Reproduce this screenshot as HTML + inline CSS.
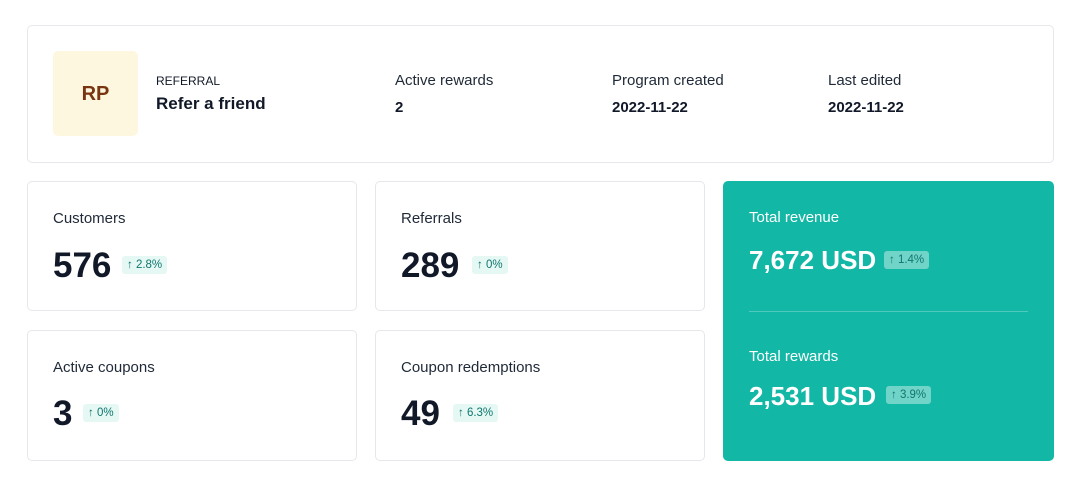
<!DOCTYPE html>
<html><head><style>
*{box-sizing:border-box;margin:0;padding:0}
body{width:1080px;height:483px;background:#fff;font-family:"Liberation Sans",sans-serif;color:#111827;position:relative;overflow:hidden}
.card{position:absolute;border:1px solid #e5e7eb;border-radius:5px;background:#fff}
.abs{position:absolute;white-space:nowrap}
.lbl{font-size:15px;color:#1f2937}
.val{font-size:15px;font-weight:bold;color:#111827}
.num{font-size:35px;font-weight:bold;color:#111827}
.badge{position:absolute;background:#e6f8f4;color:#0f766e;font-size:11.5px;border-radius:3px;height:18px;line-height:18px;padding:0 5px}
.tbadge{position:absolute;background:rgba(255,255,255,0.4);color:#0f766e;font-size:11.5px;border-radius:3px;height:18px;line-height:18px;padding:0 5px}
</style></head><body>
<div class="card" style="left:27px;top:25px;width:1027px;height:138px"></div>
<div class="abs" style="left:53px;top:51px;width:85px;height:85px;background:#fef7e0;border-radius:5px;color:#78350f;font-size:20px;font-weight:bold;text-align:center;line-height:87px">RP</div>
<div class="abs" style="left:156px;top:74px;font-size:12px;color:#111827">REFERRAL</div>
<div class="abs" style="left:156px;top:94px;font-size:17px;font-weight:bold">Refer a friend</div>
<div class="abs lbl" style="left:395px;top:72px">Active rewards</div>
<div class="abs val" style="left:395px;top:99px">2</div>
<div class="abs lbl" style="left:612px;top:72px">Program created</div>
<div class="abs val" style="left:612px;top:99px">2022-11-22</div>
<div class="abs lbl" style="left:828px;top:72px">Last edited</div>
<div class="abs val" style="left:828px;top:99px">2022-11-22</div>

<div class="card" style="left:27px;top:181px;width:330px;height:130px"></div>
<div class="abs lbl" style="left:53px;top:210px">Customers</div>
<div class="abs num" style="left:53px;top:246px">576</div>
<div class="badge" style="left:122px;top:256px">↑ 2.8%</div>

<div class="card" style="left:375px;top:181px;width:330px;height:130px"></div>
<div class="abs lbl" style="left:401px;top:210px">Referrals</div>
<div class="abs num" style="left:401px;top:246px">289</div>
<div class="badge" style="left:472px;top:256px">↑ 0%</div>

<div class="card" style="left:27px;top:330px;width:330px;height:131px"></div>
<div class="abs lbl" style="left:53px;top:359px">Active coupons</div>
<div class="abs num" style="left:53px;top:394px">3</div>
<div class="badge" style="left:83px;top:404px">↑ 0%</div>

<div class="card" style="left:375px;top:330px;width:330px;height:131px"></div>
<div class="abs lbl" style="left:401px;top:359px">Coupon redemptions</div>
<div class="abs num" style="left:401px;top:394px">49</div>
<div class="badge" style="left:453px;top:404px">↑ 6.3%</div>

<div class="abs" style="left:723px;top:181px;width:331px;height:280px;background:#13b7a6;border-radius:5px"></div>
<div class="abs" style="left:749px;top:209px;font-size:15px;color:#fff">Total revenue</div>
<div class="abs" style="left:749px;top:245px;font-size:26px;font-weight:bold;color:#fff">7,672 USD</div>
<div class="tbadge" style="left:884px;top:251px">↑ 1.4%</div>
<div class="abs" style="left:749px;top:311px;width:279px;height:1px;background:rgba(255,255,255,0.25)"></div>
<div class="abs" style="left:749px;top:348px;font-size:15px;color:#fff">Total rewards</div>
<div class="abs" style="left:749px;top:381px;font-size:26px;font-weight:bold;color:#fff">2,531 USD</div>
<div class="tbadge" style="left:886px;top:386px">↑ 3.9%</div>
</body></html>
